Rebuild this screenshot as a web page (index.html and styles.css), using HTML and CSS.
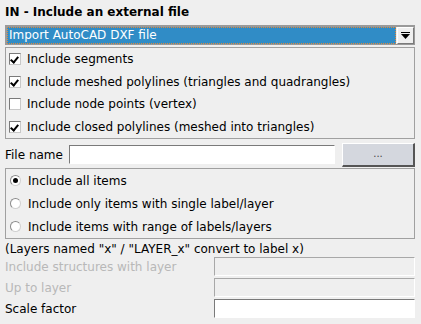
FILE: index.html
```html
<!DOCTYPE html>
<html lang="en">
<head>
  <meta charset="UTF-8">
  <title>IN - Include an external file</title>
  <link rel="stylesheet" href="styles.css">
</head>
<body>

  <div class="dialog">
    <div class="title">IN - Include an external file</div>

    <!-- file type -->
    <div class="combo">
      <div class="combo-value">Import AutoCAD DXF file</div>
      <div class="combo-arrow">
        <svg width="11" height="8" viewBox="0 0 11 8"><rect x="1" y="0" width="9" height="1" fill="#000"/><polygon points="1,2 10,2 5.5,7" fill="#000"/></svg>
      </div>
    </div>

    <!-- what to read -->
    <div class="group checks">
      <div class="opt"><span class="check on"></span>Include segments</div>
      <div class="opt"><span class="check on"></span>Include meshed polylines (triangles and quadrangles)</div>
      <div class="opt"><span class="check"></span>Include node points (vertex)</div>
      <div class="opt"><span class="check on"></span>Include closed polylines (meshed into triangles)</div>
    </div>

    <div class="file-row">
      <span class="file-label">File name</span>
      <div class="field file-field"></div>
      <div class="btn">...</div>
    </div>

    <!-- which items -->
    <div class="group radios">
      <div class="opt"><span class="radio on"></span>Include all items</div>
      <div class="opt"><span class="radio"></span>Include only items with single label/layer</div>
      <div class="opt"><span class="radio"></span>Include items with range of labels/layers</div>
    </div>

    <div class="note">(Layers named "x" / "LAYER_x" convert to label x)</div>

    <div class="form-row disabled">
      <span>Include structures with layer</span>
      <div class="field"></div>
    </div>
    <div class="form-row disabled">
      <span>Up to layer</span>
      <div class="field"></div>
    </div>
    <div class="form-row">
      <span>Scale factor</span>
      <div class="field"></div>
    </div>
  </div>

</body>
</html>
```

FILE: styles.css
```css
body {
  margin: 0;
  background: #efefef;
  font-family: "DejaVu Sans", sans-serif;
  font-size: 12px;
  color: #000;
}
.dialog {
  display: flex;
  flex-direction: column;
  padding: 5px 6px 0 5px;
}
.title {
  font-weight: bold;
  line-height: 14px;
  height: 14px;
  margin-bottom: 6px;
}

.combo {
  display: flex;
  height: 20px;
  box-sizing: border-box;
  border: 1px solid #9a9a9a;
  border-top-width: 2px;
  border-left-width: 2px;
  background: #efefef;
}
.combo-value {
  flex: 1;
  background: #308cc6;
  color: #fff;
  line-height: 15px;
  padding-left: 1px;
  border: 1px dotted #e08a3c;
  margin-right: 1px;
}
.combo-arrow {
  width: 15px;
  display: flex;
  align-items: center;
  justify-content: center;
  background: #efefef;
  border-right: 1px solid #7a7a7a;
  border-bottom: 1px solid #7a7a7a;
  border-top: 1px solid #fff;
  border-left: 1px solid #fff;
}

.group {
  display: flex;
  flex-direction: column;
  border: 1px solid #a0a0a0;
  box-sizing: border-box;
}
.checks {
  height: 92px;
  margin-top: 2px;
}
.radios {
  height: 71px;
  margin-top: 1px;
}
.opt {
  flex: 1;
  display: flex;
  align-items: center;
  padding-left: 3px;
}
.check {
  width: 12px;
  height: 12px;
  box-sizing: border-box;
  border: 1px solid #7a7a7a;
  border-right-color: #c8c8c8;
  border-bottom-color: #c8c8c8;
  background: #fff;
  margin-right: 6px;
  position: relative;
}
.check.on::after {
  content: "";
  position: absolute;
  left: 2px;
  top: 1px;
  width: 3px;
  height: 6px;
  border: solid #000;
  border-width: 0 2px 2px 0;
  transform: rotate(40deg);
}
.radio {
  width: 11px;
  height: 11px;
  box-sizing: border-box;
  border-radius: 50%;
  border: 1px solid #8a8a8a;
  border-right-color: #d0d0d0;
  border-bottom-color: #d0d0d0;
  background: #fff;
  margin: 0 7px 0 1px;
  position: relative;
}
.radio.on::after {
  content: "";
  position: absolute;
  left: 2px;
  top: 2px;
  width: 5px;
  height: 5px;
  border-radius: 50%;
  background: #000;
}

.file-row {
  display: flex;
  align-items: center;
  height: 24px;
  margin-top: 4px;
}
.file-label {
  width: 64px;
}
.field {
  height: 19px;
  box-sizing: border-box;
  background: #fff;
  border: 1px solid #fff;
  border-top-color: #7a7a7a;
  border-left-color: #7a7a7a;
}
.file-field {
  width: 266px;
  margin-bottom: 2px;
}
.btn {
  margin-left: 7px;
  flex: 1;
  height: 24px;
  box-sizing: border-box;
  background: #d4d7de;
  border: 1px solid #fff;
  border-right: 2px solid #555;
  border-bottom: 2px solid #555;
  text-align: center;
  font-size: 10px;
  line-height: 19px;
  color: #444;
}

.note {
  line-height: 14px;
  margin-top: 3px;
}
.form-row {
  display: flex;
  justify-content: space-between;
  align-items: center;
  height: 19px;
  margin-top: 2px;
}
.note + .form-row {
  margin-top: 1px;
}
.form-row .field {
  width: 201px;
}
.disabled {
  color: #b8b8b8;
}
.disabled .field {
  background: #efefef;
  border-top-color: #a8a8a8;
  border-left-color: #a8a8a8;
}
```
